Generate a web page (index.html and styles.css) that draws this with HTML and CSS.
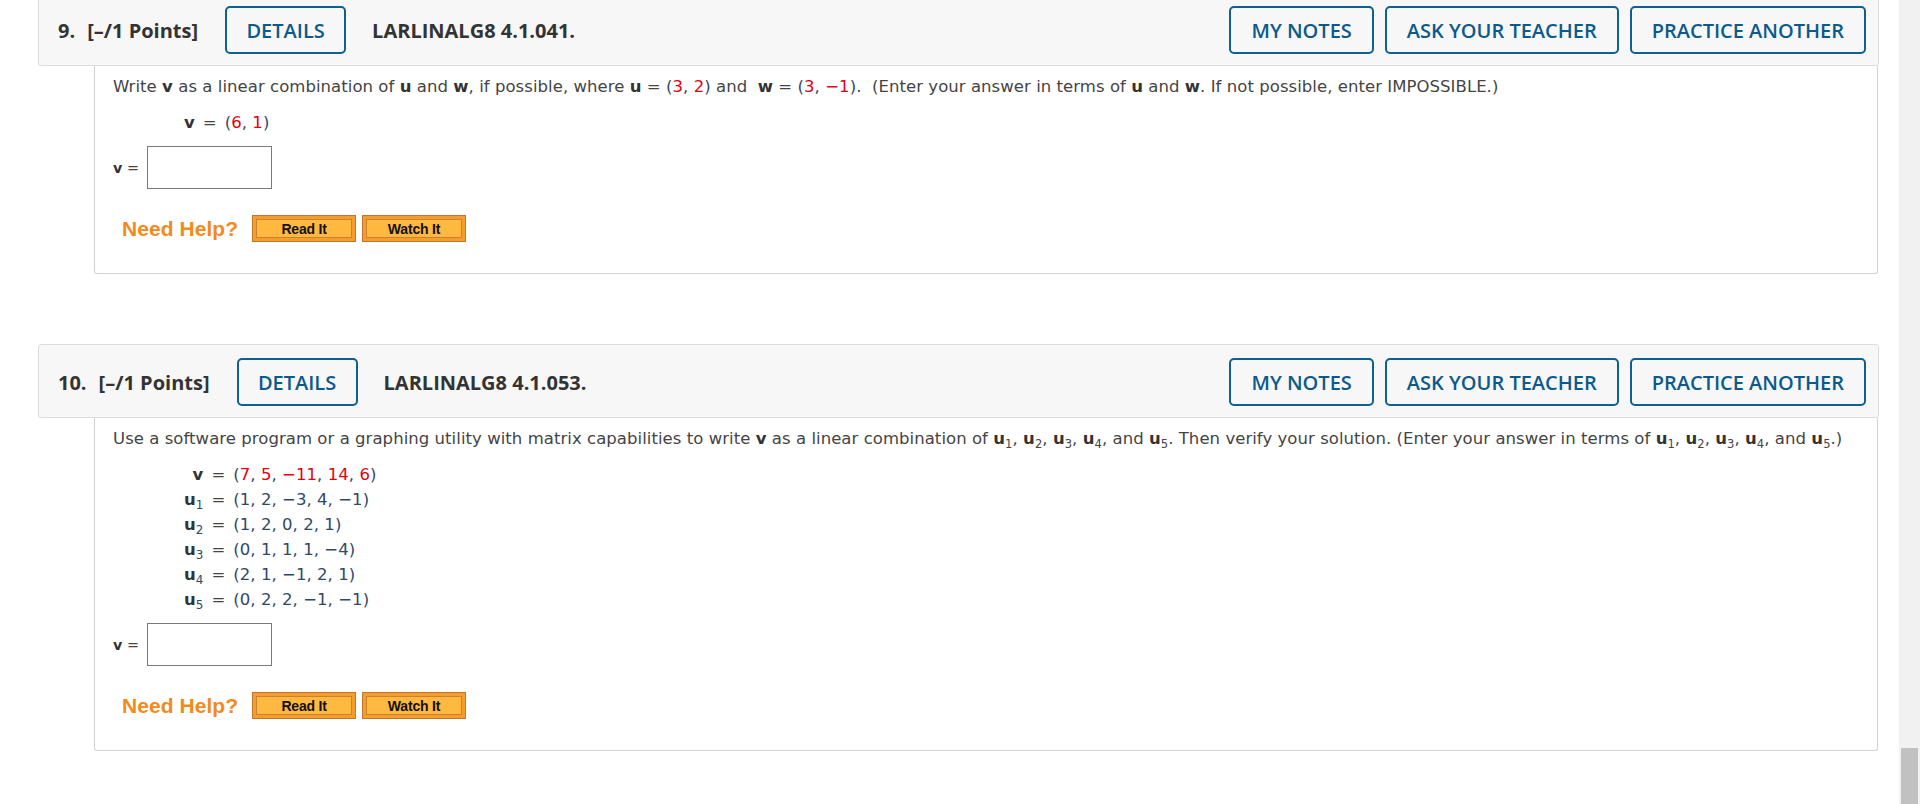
FILE: index.html
```html
<!DOCTYPE html>
<html lang="en">
<head>
  <meta charset="UTF-8">
  <title>Assignment</title>
  <link rel="stylesheet" href="styles.css">
</head>
<body>

  <div id="questions">

    <!-- QUESTION 9 -->
    <div class="question">
      <div class="q-header">
        <span class="q-title"><span class="q-num">9.</span>[–/1 Points]</span>
        <button class="q-btn details">DETAILS</button>
        <span class="q-code">LARLINALG8 4.1.041.</span>
        <div class="q-actions">
          <button class="q-btn">MY NOTES</button>
          <button class="q-btn">ASK YOUR TEACHER</button>
          <button class="q-btn">PRACTICE ANOTHER</button>
        </div>
      </div>
      <div class="q-body">
        <p class="q-text">
          Write <b>v</b> as a linear combination of <b>u</b> and <b>w</b>, if possible, where <b>u</b> = <span class="p">(</span><span class="r">3</span><span class="p">,</span> <span class="r">2</span><span class="p">)</span> and&nbsp; <b>w</b> = <span class="p">(</span><span class="r">3</span><span class="p">,</span> <span class="r">−1</span><span class="p">)</span>.&nbsp; (Enter your answer in terms of <b>u</b> and <b>w</b>. If not possible, enter IMPOSSIBLE.)
        </p>
        <table class="vectors">
          <tr><td class="lbl"><b>v</b></td><td class="eq">=</td><td><span class="p">(</span><span class="r">6</span><span class="p">,</span> <span class="r">1</span><span class="p">)</span></td></tr>
        </table>
        <div class="answer">
          <label for="ans9"><b>v</b> =</label>
          <input type="text" id="ans9">
        </div>
        <div class="help">
          <span class="help-label">Need Help?</span>
          <button class="help-btn">Read It</button>
          <button class="help-btn">Watch It</button>
        </div>
      </div>
    </div>

    <!-- QUESTION 10 -->
    <div class="question">
      <div class="q-header">
        <span class="q-title"><span class="q-num">10.</span>[–/1 Points]</span>
        <button class="q-btn details">DETAILS</button>
        <span class="q-code">LARLINALG8 4.1.053.</span>
        <div class="q-actions">
          <button class="q-btn">MY NOTES</button>
          <button class="q-btn">ASK YOUR TEACHER</button>
          <button class="q-btn">PRACTICE ANOTHER</button>
        </div>
      </div>
      <div class="q-body">
        <p class="q-text">
          Use a software program or a graphing utility with matrix capabilities to write <b>v</b> as a linear combination of <b>u</b><sub>1</sub>, <b>u</b><sub>2</sub>, <b>u</b><sub>3</sub>, <b>u</b><sub>4</sub>, and <b>u</b><sub>5</sub>. Then verify your solution. (Enter your answer in terms of <b>u</b><sub>1</sub>, <b>u</b><sub>2</sub>, <b>u</b><sub>3</sub>, <b>u</b><sub>4</sub>, and <b>u</b><sub>5</sub>.)
        </p>
        <table class="vectors">
          <tr><td class="lbl"><b>v</b></td><td class="eq">=</td><td><span class="p">(</span><span class="r">7</span><span class="p">,</span> <span class="r">5</span><span class="p">,</span> <span class="r">−11</span><span class="p">,</span> <span class="r">14</span><span class="p">,</span> <span class="r">6</span><span class="p">)</span></td></tr>
          <tr><td class="lbl"><b>u</b><sub>1</sub></td><td class="eq">=</td><td class="p">(1, 2, −3, 4, −1)</td></tr>
          <tr><td class="lbl"><b>u</b><sub>2</sub></td><td class="eq">=</td><td class="p">(1, 2, 0, 2, 1)</td></tr>
          <tr><td class="lbl"><b>u</b><sub>3</sub></td><td class="eq">=</td><td class="p">(0, 1, 1, 1, −4)</td></tr>
          <tr><td class="lbl"><b>u</b><sub>4</sub></td><td class="eq">=</td><td class="p">(2, 1, −1, 2, 1)</td></tr>
          <tr><td class="lbl"><b>u</b><sub>5</sub></td><td class="eq">=</td><td class="p">(0, 2, 2, −1, −1)</td></tr>
        </table>
        <div class="answer">
          <label for="ans10"><b>v</b> =</label>
          <input type="text" id="ans10">
        </div>
        <div class="help">
          <span class="help-label">Need Help?</span>
          <button class="help-btn">Read It</button>
          <button class="help-btn">Watch It</button>
        </div>
      </div>
    </div>

  </div>

  <!-- page scrollbar -->
  <div class="scrollbar"><div class="scroll-thumb"></div></div>

</body>
</html>
```

FILE: styles.css
```css
body {
  background-color: #fff;
  color: #444;
  font-family: "DejaVu Sans", Verdana, sans-serif;
  margin: 0;
  padding: 0;
  overflow: hidden;
}

#questions {
  margin-top: -8px;
  padding: 0 41px 0 38px;
}

.question {
  margin-bottom: 70px;
}

.q-header {
  display: flex;
  align-items: center;
  background-color: #f7f7f7;
  border: 1px solid #dcdcdc;
  border-radius: 3px;
  padding: 13px 12px 11px 19px;
  font-family: "Open Sans", sans-serif;
}

.q-title {
  font-size: 20px;
  font-weight: 700;
  color: #333;
  margin-right: 27px;
}

.q-num {
  margin-right: 12px;
}

.q-code {
  font-size: 20px;
  font-weight: 700;
  color: #333;
  margin-left: 26px;
}

.q-actions {
  display: flex;
  gap: 11px;
  margin-left: auto;
}

.q-btn {
  height: 48px;
  padding: 0 20px;
  background-color: #f7f7f7;
  border: 2px solid #0e5f92;
  border-radius: 5px;
  color: #0b5a8d;
  font-family: "Open Sans", sans-serif;
  font-size: 20px;
  font-weight: 600;
  cursor: pointer;
}

.q-btn.details {
  width: 121px;
  padding: 0;
}

.q-body {
  margin: 0 1px 0 56px;
  padding: 10px 18px 31px;
  border: 1px solid #d2d2d2;
  border-top: none;
  border-radius: 0 0 3px 3px;
  font-size: 16.5px;
  letter-spacing: 0.05px;
}

.q-text {
  margin: 0 0 12px;
  line-height: 22px;
}

b {
  color: #333;
}

sub {
  font-size: 0.7em;
  line-height: 0;
}

.r {
  color: #e3000f;
}

.p {
  color: #2f4866;
}

.vectors {
  border-collapse: collapse;
  margin: 0 0 11px 71px;
}

.vectors td {
  padding: 0;
  height: 25px;
  line-height: 25px;
}

.vectors td.lbl {
  text-align: right;
}

.vectors td.lbl sub {
  font-size: 0.72em;
  font-weight: normal;
  color: #2f4866;
}

.vectors td.eq {
  padding: 0 8px;
  color: #444;
}

.answer {
  display: flex;
  align-items: center;
  gap: 8px;
}

.answer label {
  font-size: 14.3px;
}

.answer input {
  width: 125px;
  height: 43px;
  box-sizing: border-box;
  border: 1px solid #7a7a7a;
  margin: 0;
}

.help {
  display: flex;
  align-items: center;
  margin-top: 26px;
  padding-left: 9px;
}

.help-label {
  font-family: "Liberation Sans", Arial, sans-serif;
  font-size: 21px;
  font-weight: 700;
  color: #f28a1c;
  margin-right: 14px;
}

.help-btn {
  width: 104px;
  height: 27px;
  margin-right: 6px;
  padding: 0;
  background-color: #ffb840;
  border: 1px solid #c4772b;
  box-shadow: inset 0 0 0 3px #f69c2c, inset 0 0 0 4px #c98232;
  color: #111;
  font-family: "Liberation Sans", Arial, sans-serif;
  font-size: 14px;
  font-weight: 700;
  letter-spacing: -0.2px;
  cursor: pointer;
}

.scrollbar {
  position: fixed;
  top: 0;
  right: 0;
  width: 21px;
  height: 100%;
  background-color: #f1f1f1;
}

.scroll-thumb {
  position: absolute;
  bottom: 0;
  left: 2px;
  width: 17px;
  height: 56px;
  background-color: #c1c1c1;
}
```
